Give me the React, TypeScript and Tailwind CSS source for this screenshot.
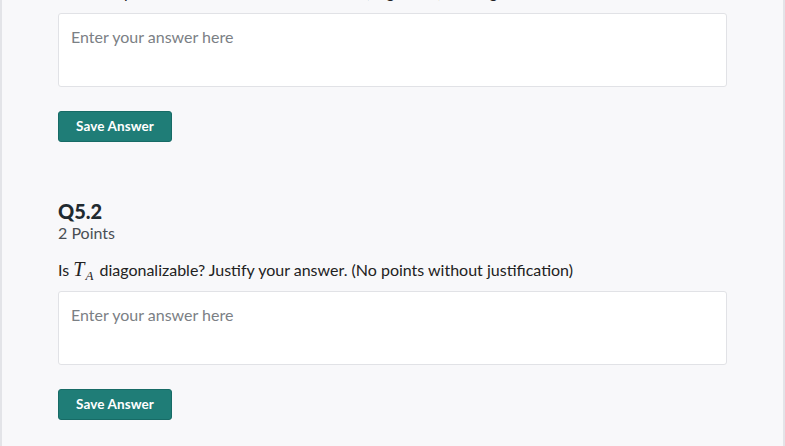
export default function App() {
  const font = { fontFamily: "Lato, 'Open Sans', sans-serif" };
  const serif = { fontFamily: "'Liberation Serif', 'DejaVu Serif', serif" };
  return (
    <div
      className="min-h-[446px] bg-[#f8f8fa] border-l-2 border-r-2 border-[#e3e4e8] overflow-hidden"
      style={font}
    >
      <div className="pl-[56px] w-[725px]">
        <p className="-mt-[18px] text-[16px] leading-[20px] text-[#222] whitespace-nowrap">
          Is this map onto? Write down its kernel and (in general) its range.
        </p>
        <textarea
          placeholder="Enter your answer here"
          className="mt-[11px] block w-full h-[74px] resize-none bg-white border border-[#e1e2e6] rounded-[3px] px-[12px] py-[13px] text-[16px] leading-[20px] placeholder:text-[#7b8085] outline-none"
        />
        <button className="mt-[24px] h-[31px] w-[114px] rounded-[3px] bg-[#1f7d77] border border-[#176b66] text-white text-[13.5px] font-bold tracking-[0.1px]">
          Save Answer
        </button>
        <h2 className="mt-[57px] text-[20px] leading-[24px] font-black text-[#1f2a30]">Q5.2</h2>
        <div className="text-[16px] leading-[20px] text-[#4a4f54]">2 Points</div>
        <p className="mt-[16px] text-[16px] leading-[20px] text-[#222] whitespace-nowrap">
          Is{" "}
          <span className="inline-block italic text-[20px] leading-[20px]" style={serif}>
            T
          </span>
          <span className="inline-block italic text-[13px] leading-[13px] translate-y-[4px] ml-[1px] mr-[2px]" style={serif}>
            A
          </span>{" "}
          diagonalizable? Justify your answer. (No points without justification)
        </p>
        <textarea
          placeholder="Enter your answer here"
          className="mt-[11px] block w-full h-[74px] resize-none bg-white border border-[#e1e2e6] rounded-[3px] px-[12px] py-[13px] text-[16px] leading-[20px] placeholder:text-[#7b8085] outline-none"
        />
        <button className="mt-[24px] h-[31px] w-[114px] rounded-[3px] bg-[#1f7d77] border border-[#176b66] text-white text-[13.5px] font-bold tracking-[0.1px]">
          Save Answer
        </button>
      </div>
    </div>
  );
}
